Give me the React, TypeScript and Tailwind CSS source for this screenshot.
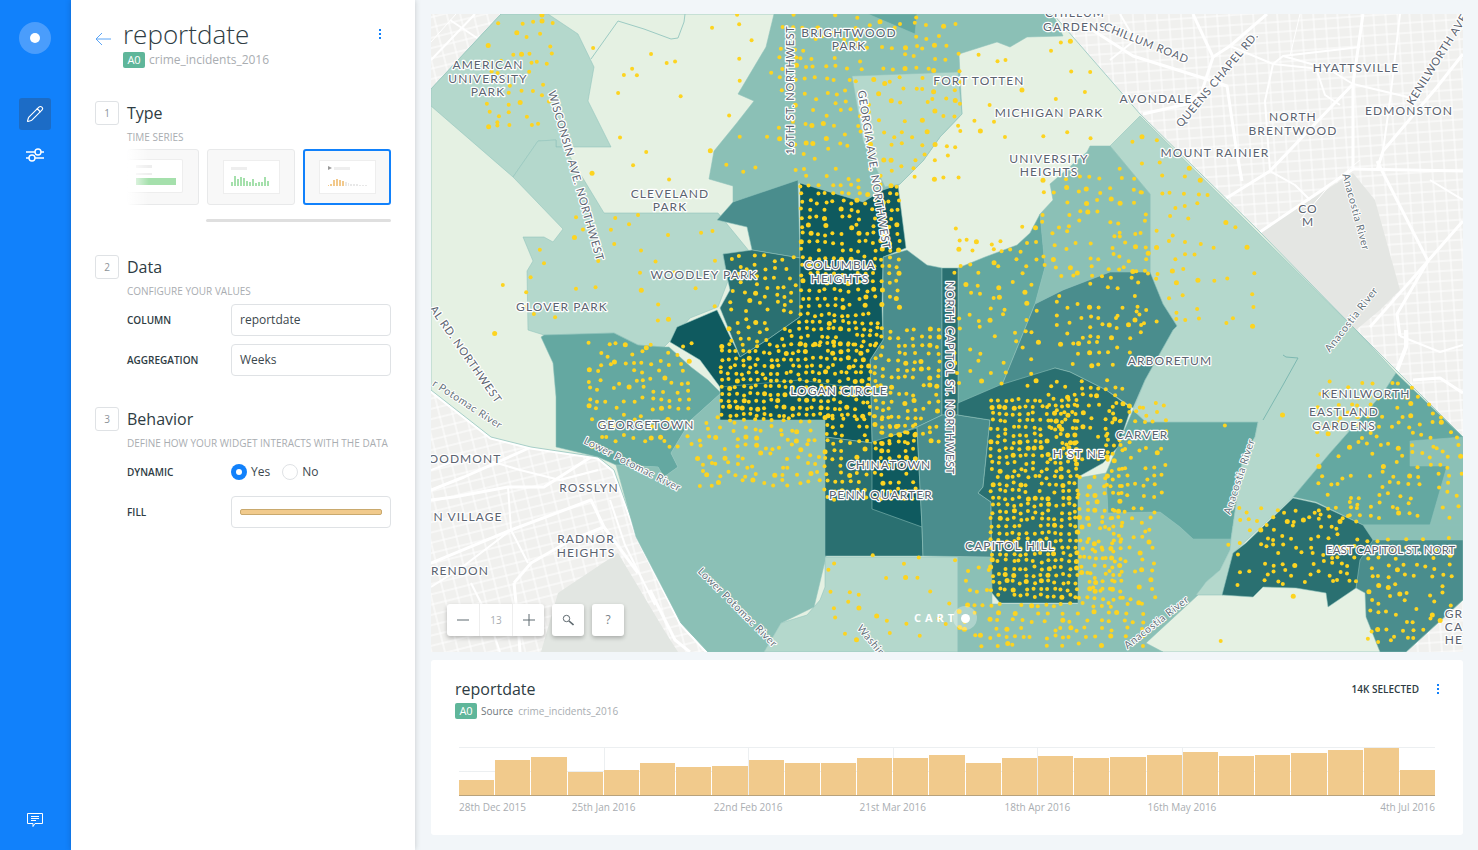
import { Pencil } from "lucide-react";

const C = {
  lightest: "#e5f1e3",
  light: "#b4d8cc",
  mid: "#8bc0b6",
  mid2: "#64a8a1",
  dark: "#4a8d8d",
  darker: "#2a7071",
  darkest: "#0f5a5f",
};

const dcOutline =
  "431,89 501,14 1053,14 1140,114 1260,232 1356,330 1463,437 1463,600 1406,652 708,652 681,623 638,537 614,470 598,457 531,447 491,437 431,390";

// neighbourhood shapes, in page coordinates, painted in this order
const hoods: [string, string][] = [
  [C.light, "431,89 501,14 548,14 578,34 594,67 588,101 598,121 611,147 556,147 556,140 538,141 513,177 431,106"],
  [C.light, "513,177 538,141 556,140 556,147 564,147 604,213 718,213 754,257 723,254 728,281 718,307 690,318 671,340 664,347 638,345 614,333 544,335 528,330 527,271 533,261 523,237 544,237 553,242 563,229"],
  [C.mid2, "541,337 553,363 556,397 556,447 598,457 616,465 658,467 664,477 678,467 671,453 691,420 721,393 708,380 691,367 669,347 664,347 638,345 614,333 544,335"],
  [C.mid, "616,465 636,537 681,623 708,652 764,652 781,623 814,607 826,557 826,420 721,420 721,393 691,420 671,453 678,467 664,477 658,467"],
  [C.light, "825,557 958,557 958,652 764,652 781,623 807,615 820,600 825,587"],
  [C.mid, "958,557 992,557 992,604 1078,604 1078,478 1106,473 1108,513 1160,512 1180,527 1193,539 1231,539 1230,550 1220,570 1206,582 1198,595 1146,643 1163,652 958,652"],
  [C.mid2, "1133,410 1146,422 1258,422 1255,437 1243,457 1231,539 1193,539 1180,527 1160,512 1108,513 1106,473"],
  [C.light, "1110,146 1140,116 1356,330 1396,373 1383,393 1330,453 1293,497 1233,553 1223,595 1196,595 1206,582 1220,570 1230,550 1231,539 1243,457 1255,437 1258,422 1146,422 1133,410 1145,380 1173,330 1177,326 1163,304 1150,274 1150,194"],
  [C.mid2, "1396,373 1463,437 1463,525 1363,525 1316,502 1293,497 1330,453 1383,393"],
  [C.mid, "1410,441 1463,437 1463,525 1430,525 1447,466 1410,466"],
  [C.mid, "1363,525 1463,525 1463,540 1370,540"],
  [C.dark, "1370,540 1463,540 1463,600 1406,652 1380,652 1366,617 1365,593 1356,588 1356,563"],
  [C.darker, "1293,498 1316,503 1363,525 1373,540 1360,560 1356,588 1328,607 1326,593 1296,588 1263,587 1253,597 1222,595 1233,553 1246,543"],
  [C.mid, "774,14 1053,14 1063,36 1027,37 1010,47 997,42 959,54 962,114 940,137 923,161 900,184 897,186 883,190 863,202 800,183 733,202 733,186 709,179 714,151 736,124 754,101 738,94 766,47"],
  [C.mid2, "868,14 917,14 915,34"],
  [C.light, "852,76 958,72 962,114 940,137 923,161 900,184 885,187 863,141"],
  [C.mid, "1050,184 1053,200 1040,214 1045,267 1035,304 1063,290 1110,272 1150,272 1150,194 1110,146 1090,146 1087,152"],
  [C.dark, "717,220 733,202 798,180 800,258 752,250 747,227"],
  [C.darker, "723,254 752,250 800,258 800,317 767,340 740,357 720,308 730,290 728,281"],
  [C.mid2, "958,268 985,257 1017,245 1030,233 1040,214 1045,267 1035,304 1000,390 958,415"],
  [C.dark, "1035,304 1063,290 1110,272 1150,272 1163,304 1177,326 1173,330 1145,380 1133,408 1106,390 1070,372 1055,368 1000,390"],
  [C.dark, "883,257 907,250 927,265 942,268 942,415 917,427 872,443 870,360 883,340"],
  [C.darker, "942,268 958,268 958,415 942,415"],
  [C.darkest, "800,183 863,202 883,190 898,185 906,248 883,257 882,307 883,340 870,360 872,443 825,437 825,420 720,420 720,387 700,360 670,342 677,327 717,310 740,357 767,340 800,317"],
  [C.darker, "825,437 872,443 917,427 922,527 923,556 825,556"],
  [C.darkest, "872,442 917,428 922,527 872,509"],
  [C.dark, "923,556 991,557 991,502 978,493 983,487 990,420 958,415 942,415 917,427 922,527"],
  [C.darker, "958,403 1000,385 1055,368 1070,372 1106,390 1131,408 1118,447 1103,463 1078,477 1078,603 1000,603 992,593 991,502 978,493 983,487 990,420 958,415"],
];

// white streets on the grey base map
const roads: [string, number][] = [
  ["431,390 491,437 531,447 598,457 614,470 638,537 681,623 708,652", 5],
  ["431,490 464,477 518,453 531,447", 3],
  ["431,500 454,497 508,487 544,487 591,457", 3],
  ["431,563 511,530 591,500 604,527", 3],
  ["514,583 531,563 571,540 604,527 638,573", 3],
  ["508,487 511,530 528,563", 2],
  ["471,583 488,617 500,652", 2],
  ["514,583 518,623 520,652", 3],
  ["431,587 461,568 511,530", 2],
  ["650,590 675,640 690,652", 3],
  ["431,470 470,455 520,470 560,480 598,470", 2],
  ["450,20 480,40 470,60", 2],
  ["431,60 475,14", 2],
  ["431,42 456,14", 1],
  ["610,500 625,545 655,605", 2],
  ["1083,24 1133,56 1200,77 1227,86 1237,154 1242,181", 3],
  ["1193,14 1213,57 1202,91 1187,104 1143,114", 3],
  ["1267,14 1230,46 1213,57", 3],
  ["1230,46 1273,64 1330,70 1353,84", 2],
  ["1360,47 1283,56 1273,64 1265,101 1270,171", 2],
  ["1225,199 1270,171 1353,84 1363,14", 3],
  ["1260,232 1353,169 1353,84", 3],
  ["1353,169 1463,171", 3],
  ["1377,161 1428,261 1370,327", 3],
  ["1463,221 1428,261 1397,314 1400,336", 3],
  ["1463,54 1437,87 1383,151 1377,170", 3],
  ["1396,373 1406,347 1406,330", 4],
  ["1413,380 1440,378 1463,393", 3],
  ["1353,84 1420,100", 2],
  ["1340,650 1400,590", 2],
  ["1120,14 1135,40 1110,60", 2],
  ["1300,14 1290,56", 1],
  ["1283,56 1315,65 1325,95 1340,105", 2],
  ["1300,220 1330,185 1360,160", 1],
  ["1400,14 1390,100 1383,151", 2],
  ["1430,180 1463,200", 2],
  ["1270,171 1295,185 1310,200", 2],
  ["1400,336 1440,352 1463,345", 2],
];

type Box = [number, number, number, number, number, number];

// x0, y0, x1, y1, grid spacing, share of grid cells that hold a dot
const dotAreas: Box[] = [
  [802, 186, 900, 312, 8, 0.82],
  [722, 345, 882, 418, 7, 0.92],
  [800, 315, 882, 350, 7, 0.92],
  [730, 258, 800, 345, 9, 0.72],
  [782, 14, 960, 184, 11, 0.72],
  [712, 14, 782, 180, 14, 0.3],
  [882, 330, 945, 450, 8, 0.78],
  [826, 418, 920, 500, 8, 0.85],
  [992, 400, 1078, 602, 7, 0.9],
  [1050, 380, 1130, 462, 8, 0.7],
  [1080, 470, 1125, 600, 8, 0.7],
  [1110, 405, 1170, 500, 9, 0.68],
  [590, 345, 690, 450, 9, 0.62],
  [700, 420, 826, 490, 9, 0.78],
  [490, 14, 555, 130, 10, 0.6],
  [595, 50, 690, 190, 14, 0.36],
  [530, 220, 720, 330, 14, 0.36],
  [1060, 275, 1150, 370, 10, 0.62],
  [958, 230, 1045, 392, 11, 0.58],
  [1045, 180, 1148, 272, 11, 0.62],
  [1120, 140, 1262, 330, 13, 0.52],
  [1240, 510, 1360, 590, 9, 0.66],
  [1370, 540, 1460, 645, 9, 0.62],
  [1320, 385, 1463, 525, 10, 0.68],
  [830, 560, 958, 650, 15, 0.46],
  [958, 605, 1150, 650, 8, 0.68],
  [1082, 510, 1160, 605, 10, 0.62],
  [960, 40, 1100, 140, 16, 0.46],
  [1225, 600, 1300, 650, 18, 0.2],
  [431, 130, 525, 330, 22, 0.18],
  [1210, 410, 1290, 560, 22, 0.18],
  [958, 560, 992, 600, 10, 0.45],
];

function inside(x: number, y: number, pts: number[][]) {
  let hit = false;
  for (let i = 0, j = pts.length - 1; i < pts.length; j = i++) {
    const [xi, yi] = pts[i];
    const [xj, yj] = pts[j];
    if (yi > y !== yj > y && x < ((xj - xi) * (y - yi)) / (yj - yi) + xi) hit = !hit;
  }
  return hit;
}

function makeDots() {
  let seed = 20160704;
  const rnd = () => {
    seed = (seed * 1664525 + 1013904223) % 4294967296;
    return seed / 4294967296;
  };
  const dc = dcOutline.split(" ").map((p) => p.split(",").map(Number));
  const out: { x: number; y: number; r: number }[] = [];
  for (const [x0, y0, x1, y1, step, keep] of dotAreas) {
    const wobble = step < 8.5 ? 0.45 : 0.7;
    for (let y = y0; y < y1; y += step) {
      for (let x = x0; x < x1; x += step) {
        const a = rnd();
        const jx = (rnd() - 0.5) * step * wobble;
        const jy = (rnd() - 0.5) * step * wobble;
        const size = rnd();
        if (a > keep || !inside(x + jx, y + jy, dc)) continue;
        out.push({ x: x + jx, y: y + jy, r: size > 0.85 ? 2.5 : 2 });
      }
    }
  }
  return out;
}

const dots = makeDots();

const places: [string, number, number][] = [
  ["AMERICAN", 488, 69], ["UNIVERSITY", 488, 83], ["PARK", 488, 96],
  ["BRIGHTWOOD", 849, 37], ["PARK", 849, 50], ["FORT TOTTEN", 979, 85],
  ["CHILLUM", 1075, 17], ["GARDENS", 1075, 31], ["MICHIGAN PARK", 1049, 117],
  ["UNIVERSITY", 1049, 163], ["HEIGHTS", 1049, 176], ["CLEVELAND", 670, 198],
  ["PARK", 670, 211], ["WOODLEY PARK", 704, 279], ["GLOVER PARK", 562, 311],
  ["COLUMBIA", 840, 269], ["HEIGHTS", 840, 283], ["LOGAN CIRCLE", 839, 395],
  ["GEORGETOWN", 646, 429], ["CHINATOWN", 889, 469], ["PENN QUARTER", 881, 499],
  ["CAPITOL HILL", 1010, 550], ["H ST NE", 1079, 458], ["CARVER", 1142, 439],
  ["ARBORETUM", 1170, 365], ["KENILWORTH", 1366, 398], ["EASTLAND", 1344, 416],
  ["GARDENS", 1344, 430], ["ROSSLYN", 589, 492], ["RADNOR", 586, 543],
  ["HEIGHTS", 586, 557], ["OODMONT", 465, 463], ["N VILLAGE", 468, 521],
  ["RENDON", 460, 575], ["AVONDALE", 1156, 103], ["HYATTSVILLE", 1356, 72],
  ["NORTH", 1293, 121], ["BRENTWOOD", 1293, 135], ["EDMONSTON", 1409, 115],
  ["MOUNT RAINIER", 1215, 157], ["CO", 1308, 213], ["M", 1308, 226],
  ["GR", 1454, 618], ["CA", 1454, 631], ["HE", 1454, 644],
];

const streets: [string, number, number, number][] = [
  ["WISCONSIN AVE. NORTHWEST", 575, 176, 74],
  ["16TH ST. NORTHWEST", 791, 90, -90],
  ["GEORGIA AVE. NORTHWEST", 873, 170, 81],
  ["NORTH CAPITOL ST. NORTHWEST", 949, 378, 90],
  ["CHILLUM ROAD", 1146, 44, 22],
  ["QUEENS CHAPEL RD.", 1218, 80, -50],
  ["KENILWORTH AVE", 1438, 60, -58],
  ["AL RD. NORTHWEST", 465, 355, 55],
];

const rivers: [string, number, number, number][] = [
  ["Anacostia River", 1355, 212, 75],
  ["Anacostia River", 1352, 320, -52],
  ["Anacostia River", 1240, 477, -72],
  ["Anacostia River", 1157, 623, -38],
  ["Lower Potomac River", 632, 465, 27],
  ["Lower Potomac River", 737, 608, 45],
  ["r Potomac River", 467, 405, 33],
  ["Washington", 878, 650, 50],
];

function CityMap() {
  return (
    <svg viewBox="431 14 1032 638" className="block h-full w-full font-['Lato','Open_Sans',sans-serif]">
      <defs>
        <pattern id="blocksWest" width="13" height="10" patternUnits="userSpaceOnUse" patternTransform="rotate(-14)">
          <path d="M0 1H13M1 0V10" stroke="#ffffff" strokeWidth="1" fill="none" />
        </pattern>
        <pattern id="blocksEast" width="12" height="10" patternUnits="userSpaceOnUse" patternTransform="rotate(-4)">
          <path d="M0 1H12M1 0V10" stroke="#ffffff" strokeWidth="1" fill="none" />
        </pattern>
      </defs>
      <rect x="431" y="14" width="1032" height="638" fill="#f0f0ee" />
      <rect x="431" y="14" width="400" height="638" fill="url(#blocksWest)" />
      <rect x="831" y="14" width="632" height="638" fill="url(#blocksEast)" />
      <polygon points="558,593 618,553 664,630 678,652 541,652" fill="#e2e6e2" />
      <polygon points="1260,232 1310,200 1353,173 1375,200 1400,290 1380,310 1356,330" fill="#e4e6e3" />
      {roads.map(([points, width], i) => (
        <polyline key={i} points={points} fill="none" stroke="#ffffff" strokeWidth={width} strokeLinejoin="round" />
      ))}
      <polygon points={dcOutline} fill={C.lightest} stroke="#a7cfc8" strokeWidth="1" />
      <polyline points="591,59 618,21 644,29 671,39 678,38 684,22 685,14" fill="none" stroke="#9ccbc3" strokeWidth="1" />
      {hoods.map(([fill, points], i) => (
        <polygon key={i} points={points} fill={fill} stroke="#8fc2bb" strokeOpacity="0.55" strokeWidth="1" />
      ))}
      <polyline points="1283,355 1286,357 1298,358 1283,385 1263,420" fill="none" stroke="#7db8b1" strokeWidth="1" />
      <polyline points="720,387 800,380 872,390" fill="none" stroke="#3d8385" strokeWidth="1" />
      {dots.map((d, i) => (
        <circle key={i} cx={d.x} cy={d.y} r={d.r} fill="#fdd420" />
      ))}
      {places.map(([label, x, y], i) => (
        <text key={i} x={x} y={y} textAnchor="middle" fontSize="12" letterSpacing="1.1" fill="#5b6370" stroke="#ffffff" strokeWidth="2.5" paintOrder="stroke" strokeLinejoin="round">
          {label}
        </text>
      ))}
      <text x="1326" y="554" fontSize="11.5" letterSpacing="0" fill="#5b6370" stroke="#ffffff" strokeWidth="2.5" paintOrder="stroke" strokeLinejoin="round">
        EAST CAPITOL ST. NORT
      </text>
      {streets.map(([label, x, y, angle], i) => (
        <text key={i} x={x} y={y} transform={`rotate(${angle} ${x} ${y})`} textAnchor="middle" dominantBaseline="middle" fontSize="11" letterSpacing="0.7" fill="#5b6370" stroke="#ffffff" strokeWidth="2.5" paintOrder="stroke" strokeLinejoin="round">
          {label}
        </text>
      ))}
      {rivers.map(([label, x, y, angle], i) => (
        <text key={i} x={x} y={y} transform={`rotate(${angle} ${x} ${y})`} textAnchor="middle" dominantBaseline="middle" fontSize="10.5" letterSpacing="0.5" fill="#66737c" stroke="#ffffff" strokeWidth="2" paintOrder="stroke" strokeLinejoin="round">
          {label}
        </text>
      ))}
    </svg>
  );
}

function Kebab() {
  return (
    <div className="flex flex-col gap-[2px]">
      <span className="h-[2px] w-[2px] bg-[#1181fb]" />
      <span className="h-[2px] w-[2px] bg-[#1181fb]" />
      <span className="h-[2px] w-[2px] bg-[#1181fb]" />
    </div>
  );
}

function Chip() {
  return (
    <span className="flex h-[16px] w-[22px] items-center justify-center rounded-[2px] bg-[#5fb69a] text-[11px] text-white">A0</span>
  );
}

function Step({ n, title, sub }: { n: number; title: string; sub: string }) {
  return (
    <div>
      <div className="flex items-center gap-2">
        <span className="flex h-[24px] w-[24px] items-center justify-center rounded-[3px] border border-[#dfe2e5] text-[10px] text-[#8d9399]">{n}</span>
        <span className="text-[16px] leading-[24px] text-[#2e3c43]">{title}</span>
      </div>
      <p className="mt-[6px] ml-[32px] text-[10px] leading-[12px] text-[#a9adb1]">{sub}</p>
    </div>
  );
}

function Field({ label, children }: { label: string; children: React.ReactNode }) {
  return (
    <div className="ml-[32px] flex items-center">
      <span className="w-[104px] text-[10px] font-semibold text-[#2e3c43]">{label}</span>
      {children}
    </div>
  );
}

function InputBox({ children }: { children: React.ReactNode }) {
  return (
    <div className="flex h-[32px] w-[160px] items-center rounded-[4px] border border-[#dfe2e5] px-2 text-[12px] text-[#3b474d]">{children}</div>
  );
}

const greenBars = [6, 13, 10, 12, 11, 7, 5, 9, 4, 6, 6, 12, 7];
const orangeBars = [1, 3, 7, 9, 8, 6, 5, 4, 3, 2, 2, 1, 1, 1];

function TypeCards() {
  return (
    <div className="relative mt-[6px] ml-[32px] w-[264px] overflow-hidden">
      <div className="flex gap-2">
        <div className="h-[56px] w-[72px] flex-none rounded-[3px] border border-[#e8e9ea] bg-[#f8f8f8] py-[10px] pr-[16px]">
          <div className="flex h-[32px] flex-col rounded-[1px] bg-white pl-[8px] pt-[5px] shadow-[0_0_0_1px_#eeeeee]">
            <span className="h-[3px] w-[16px] bg-[#eeeeee]" />
            <span className="mt-[5px] h-[2px] w-[16px] bg-[#eeeeee]" />
            <span className="mt-[3px] h-[7px] w-[40px] bg-[#a5e0ac]" />
          </div>
        </div>
        <div className="flex h-[56px] w-[88px] flex-none items-center justify-center rounded-[3px] border border-[#e8e9ea] bg-[#f8f8f8]">
          <div className="flex h-[32px] w-[55px] flex-col justify-between bg-white px-[7px] pb-[7px] pt-[6px] shadow-[0_0_0_1px_#eeeeee]">
            <span className="h-[3px] w-[16px] bg-[#eeeeee]" />
            <div className="flex h-[10px] items-end gap-[1px]">
              {greenBars.map((h, i) => (
                <span key={i} className="w-[2px] bg-[#a5e0ac]" style={{ height: h * 0.75 }} />
              ))}
            </div>
          </div>
        </div>
        <div className="flex h-[56px] w-[88px] flex-none items-center justify-center rounded-[3px] border-2 border-[#1181fb] bg-[#f8f8f8]">
          <div className="flex h-[32px] w-[55px] flex-col justify-between bg-white px-[8px] pb-[7px] pt-[5px] shadow-[0_0_0_1px_#eeeeee]">
            <div className="flex items-center gap-[2px]">
              <span className="h-0 w-0 border-y-[2px] border-l-[4px] border-y-transparent border-l-[#9a9a9a]" />
              <span className="h-[3px] w-[16px] bg-[#eeeeee]" />
            </div>
            <div className="flex h-[8px] items-end gap-[1px]">
              {orangeBars.map((h, i) => (
                <span key={i} className={i < 6 ? "w-[2px] bg-[#f2c98c]" : "w-[2px] bg-[#e8e8e8]"} style={{ height: h * 0.8 }} />
              ))}
            </div>
          </div>
        </div>
      </div>
      <div className="absolute inset-y-0 left-0 w-[22px] bg-gradient-to-r from-white to-transparent" />
      <div className="mt-[14px] ml-[79px] h-[3px] w-[185px] rounded-full bg-[#dfdfdf]" />
    </div>
  );
}

function Radio({ on, label }: { on?: boolean; label: string }) {
  return (
    <div className="flex items-center gap-[4px] text-[12px] text-[#3b474d]">
      {on ? (
        <span className="flex h-[16px] w-[16px] items-center justify-center rounded-full bg-[#1181fb]">
          <span className="h-[6px] w-[6px] rounded-full bg-white" />
        </span>
      ) : (
        <span className="h-[16px] w-[16px] rounded-full border border-[#dfe2e5]" />
      )}
      {label}
    </div>
  );
}

function SidePanel() {
  return (
    <aside className="z-10 h-full w-[344px] flex-none bg-white pl-[24px] shadow-[0_0_6px_rgba(0,0,0,0.18)]">
      <div className="flex h-[69px] w-[286px] pt-[15px]">
        <svg width="16" height="14" viewBox="0 0 16 14" className="mt-[17px] flex-none" fill="none" stroke="#5aa4f5" strokeWidth="1">
          <path d="M16 7H1M7 1L1 7l6 6" />
        </svg>
        <div className="ml-[12px] flex-1">
          <h1 className="text-[26px] font-light leading-[38px] text-[#2e3c43]">reportdate</h1>
          <div className="-mt-[1px] flex items-center gap-[4px]">
            <Chip />
            <span className="text-[12px] leading-[16px] text-[#a9adb1]">crime_incidents_2016</span>
          </div>
        </div>
        <div className="mt-[14px]">
          <Kebab />
        </div>
      </div>

      <div className="mt-[32px] w-[296px]">
        <Step n={1} title="Type" sub="TIME SERIES" />
        <TypeCards />
      </div>

      <div className="mt-[33px] w-[296px]">
        <Step n={2} title="Data" sub="CONFIGURE YOUR VALUES" />
        <div className="mt-[7px] flex flex-col gap-[8px]">
          <Field label="COLUMN">
            <InputBox>reportdate</InputBox>
          </Field>
          <Field label="AGGREGATION">
            <InputBox>Weeks</InputBox>
          </Field>
        </div>
      </div>

      <div className="mt-[31px] w-[296px]">
        <Step n={3} title="Behavior" sub="DEFINE HOW YOUR WIDGET INTERACTS WITH THE DATA" />
        <div className="mt-[15px] flex h-[16px] items-center">
          <Field label="DYNAMIC">
            <div className="flex gap-[12px]">
              <Radio on label="Yes" />
              <Radio label="No" />
            </div>
          </Field>
        </div>
        <div className="mt-[16px]">
          <Field label="FILL">
            <InputBox>
              <span className="h-[6px] w-full rounded-[2px] border border-[#c9a96e] bg-[#f1ca8c]" />
            </InputBox>
          </Field>
        </div>
      </div>
    </aside>
  );
}

function Rail() {
  return (
    <nav className="flex h-full w-[71px] flex-none flex-col items-center bg-[#1181fb] pr-[1px] pt-[22px] pb-[22px]">
      <div className="flex h-[32px] w-[32px] items-center justify-center rounded-full bg-[#4a9dfc]">
        <span className="h-[10px] w-[10px] rounded-full bg-white" />
      </div>
      <div className="mt-[44px] flex h-[32px] w-[32px] items-center justify-center rounded-[3px] bg-[#1c6cc6]">
        <Pencil size={18} color="#ffffff" strokeWidth={1.5} />
      </div>
      <svg width="20" height="16" viewBox="0 0 20 16" className="mt-[17px]" fill="none" stroke="#ffffff" strokeWidth="1.4">
        <path d="M1 5h9M16 5h3M1 11h3M10 11h9" />
        <circle cx="13" cy="5" r="3" />
        <circle cx="7" cy="11" r="3" />
      </svg>
      <svg width="16" height="15" viewBox="0 0 16 15" className="mt-auto" fill="none" stroke="#ffffff" strokeWidth="1">
        <path d="M0.5 0.5h15v10H8l-2 3v-3H0.5z" />
        <path d="M4 3.5h8M4 5.5h8M4 7.5h5" />
      </svg>
    </nav>
  );
}

function MapControls() {
  return (
    <div className="absolute bottom-[16px] left-[16px] flex gap-[8px]">
      <div className="flex h-[32px] w-[97px] items-center rounded-[3px] bg-white text-[#6f7a80] shadow-[0_2px_4px_rgba(0,0,0,0.25)]">
        <span className="flex h-full w-[33px] items-center justify-center border-r border-[#eeeeee]">
          <svg width="12" height="12" viewBox="0 0 12 12" stroke="#5f6a70" strokeWidth="1"><path d="M0 6h12" /></svg>
        </span>
        <span className="flex h-full w-[33px] items-center justify-center border-r border-[#eeeeee] text-[10px] text-[#a9adb1]">13</span>
        <span className="flex h-full w-[31px] items-center justify-center">
          <svg width="12" height="12" viewBox="0 0 12 12" stroke="#5f6a70" strokeWidth="1"><path d="M0 6h12M6 0v12" /></svg>
        </span>
      </div>
      <span className="flex h-[32px] w-[32px] items-center justify-center rounded-[3px] bg-white shadow-[0_2px_4px_rgba(0,0,0,0.25)]">
        <svg width="12" height="12" viewBox="0 0 12 12" fill="none" stroke="#5f6a70">
          <circle cx="4.5" cy="4.5" r="3.2" />
          <path d="M7 7l4.5 4" strokeWidth="1.6" />
        </svg>
      </span>
      <span className="flex h-[32px] w-[32px] items-center justify-center rounded-[3px] bg-white text-[12px] text-[#7a8388] shadow-[0_2px_4px_rgba(0,0,0,0.25)]">?</span>
    </div>
  );
}

function CartoLogo() {
  return (
    <div className="absolute bottom-[22px] left-[483px] flex items-center">
      <span className="text-[11px] font-bold tracking-[4px] text-white">CART</span>
      <span className="-ml-[5px] flex h-[24px] w-[24px] items-center justify-center rounded-full bg-white/30">
        <span className="h-[9px] w-[9px] rounded-full bg-white" />
      </span>
    </div>
  );
}

const weeks = [15, 35, 38, 23, 25, 32, 28, 29, 35, 32, 32, 37, 37, 40, 32, 37, 39, 37, 38, 40, 43, 39, 40, 42, 45, 47, 25];

const ticks = [
  { label: "25th Jan 2016", at: 4 },
  { label: "22nd Feb 2016", at: 8 },
  { label: "21st Mar 2016", at: 12 },
  { label: "18th Apr 2016", at: 16 },
  { label: "16th May 2016", at: 20 },
];

function Histogram() {
  return (
    <div className="mt-[28px] w-[980px] pl-[4px]">
      <div className="relative h-[49px] border-t border-[#eceff1]">
        <div className="absolute inset-x-0 top-[23px] h-px bg-[#eceff1]" />
        {ticks.map((t) => (
          <div key={t.at} className="absolute top-0 h-full w-px bg-[#eceff1]" style={{ left: `${(t.at / 27) * 100}%` }} />
        ))}
        <div className="absolute inset-0 flex items-end gap-[1px] border-b border-[#b8a27c]">
          {weeks.map((h, i) => (
            <div key={i} className="flex-1 bg-[#f1ca8c]" style={{ height: h }} />
          ))}
        </div>
      </div>
      <div className="relative mt-[4px] h-[14px] text-[10px] leading-[14px] text-[#a9adb1]">
        <span className="absolute left-0">28th Dec 2015</span>
        {ticks.map((t) => (
          <span key={t.at} className="absolute -translate-x-1/2 whitespace-nowrap" style={{ left: `${(t.at / 27) * 100}%` }}>
            {t.label}
          </span>
        ))}
        <span className="absolute right-0">4th Jul 2016</span>
      </div>
    </div>
  );
}

function TimeSeriesWidget() {
  return (
    <section className="mt-[8px] h-[175px] w-[1032px] rounded-[3px] bg-white pl-[24px] pt-[18px]">
      <div className="flex w-[984px] items-center justify-between">
        <h2 className="text-[16px] leading-[22px] text-[#2e3c43]">reportdate</h2>
        <div className="flex items-center gap-[18px]">
          <span className="text-[10px] font-semibold text-[#2e3c43]">14K SELECTED</span>
          <Kebab />
        </div>
      </div>
      <div className="mt-[3px] flex items-center gap-[4px] text-[10px]">
        <Chip />
        <span className="text-[#6f777c]">Source</span>
        <span className="ml-[1px] text-[#a9adb1]">crime_incidents_2016</span>
      </div>
      <Histogram />
    </section>
  );
}

export default function App() {
  return (
    <div className="flex h-[850px] w-[1478px] overflow-hidden bg-[#f2f6f9] font-['Open_Sans',sans-serif]">
      <Rail />
      <SidePanel />
      <main className="pl-[16px] pt-[14px]">
        <div className="relative h-[638px] w-[1032px] overflow-hidden">
          <CityMap />
          <MapControls />
          <CartoLogo />
        </div>
        <TimeSeriesWidget />
      </main>
    </div>
  );
}
